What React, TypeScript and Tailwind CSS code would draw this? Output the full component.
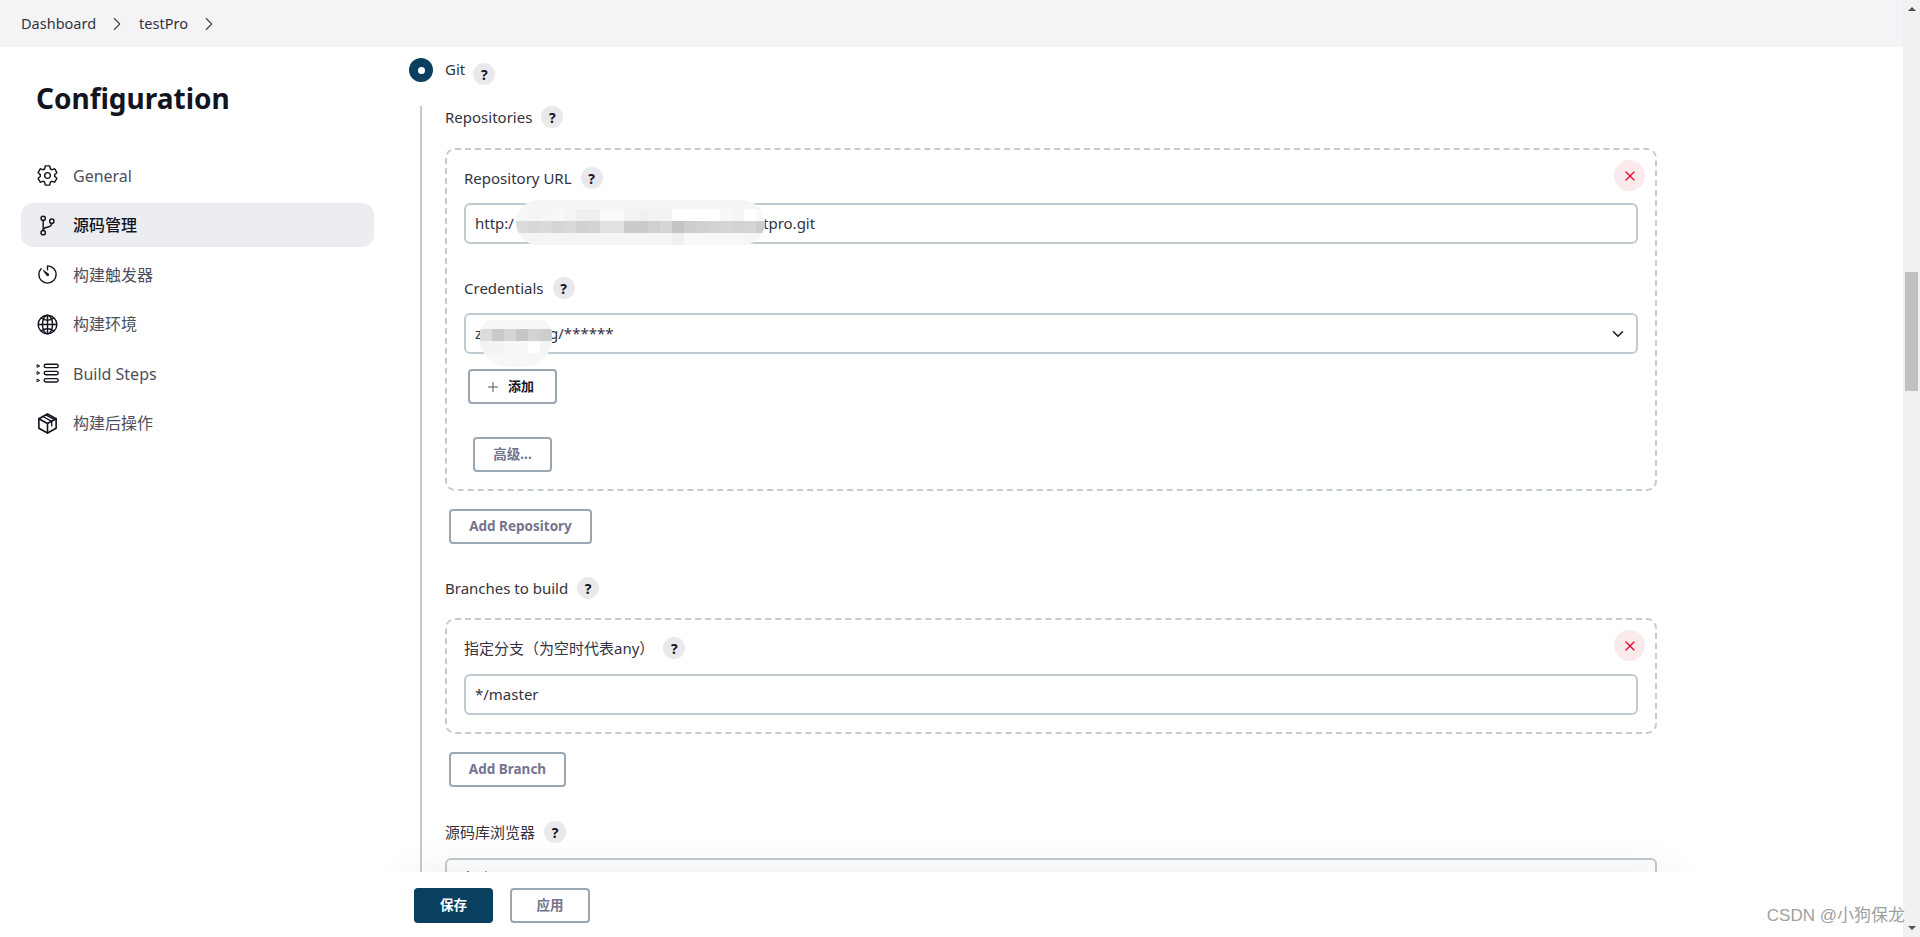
import { ChevronDown, ChevronRight, Plus, X } from "lucide-react";
import { IoGitBranchOutline, IoGlobeOutline, IoSettingsOutline, IoTimerOutline } from "react-icons/io5";

const FONT = "font-['Noto_Sans','Noto_Sans_CJK_SC',sans-serif]";

const urlMosaic = [
  ["#f6f7f8", "#f4f5f6", "#f5f6f7", "#f7f8f8", "#f3f4f5", "#efeff0", "#efeff0", "#f9f9fa", "#f9f9fa", "#f2f2f3", "#f1f1f2", "#f3f3f4", "#f3f3f4", "#ffffff", "#ffffff", "#ffffff", "#ffffff", "#f7f8f8", "#f6f6f7", "#ffffff", "#f9f9fa"],
  ["#dcdcde", "#d7d7d9", "#dadadc", "#d6d6d8", "#d9d9db", "#d1d1d3", "#d3d3d5", "#e1e1e3", "#e1e1e3", "#cbcbcd", "#cbcbcd", "#d0d0d2", "#d5d5d7", "#c4c4c6", "#cdcdcf", "#d0d0d2", "#d3d3d5", "#d6d6d8", "#d2d2d4", "#d5d5d7", "#cdcdcf"],
  ["#f4f5f7", "#f4f5f7", "#f4f5f7", "#f4f5f7", "#f4f5f7", "#f4f5f7", "#f4f5f7", "#f4f5f7", "#f4f5f7", "#f4f5f7", "#f4f5f7", "#f4f5f7", "#f4f5f7", "#eff0f2", "#f7f8f9", "#f7f8f9", "#f7f8f9", "#f7f8f9", "#f7f8f9", "#f4f5f7", "#f4f5f7"],
];

const credMosaic = [
  ["#dcdcde", "#c9c9cb", "#d5d5d7", "#c6c6c8", "#d2d2d4", "#cdcdcf"],
  ["#f2f3f5", "#f2f3f5", "#f8f8f9", "#f6f7f8", "#ffffff", "#f4f5f7"],
];

const navItems = [
  { label: "General", icon: <IoSettingsOutline size={23} /> },
  { label: "源码管理", icon: <IoGitBranchOutline size={23} />, active: true },
  { label: "构建触发器", icon: <IoTimerOutline size={23} /> },
  { label: "构建环境", icon: <IoGlobeOutline size={23} /> },
  { label: "Build Steps", icon: <StepsIcon /> },
  { label: "构建后操作", icon: <BoxIcon /> },
];

function StepsIcon() {
  return (
    <svg width="23" height="23" viewBox="0 0 23 23" fill="none" stroke="currentColor" strokeWidth="1.4">
      <rect x="8.2" y="2.2" width="14" height="3.4" rx="1.7" />
      <rect x="8.2" y="9.4" width="14" height="3.4" rx="1.7" />
      <rect x="8.2" y="16.6" width="14" height="3.4" rx="1.7" />
      <path d="M1 2.6l2.8 1.4-2.8 1.4zM1 9.6l2.8 1.4-2.8 1.4zM1 17l2.8 1.4-2.8 1.4z" strokeLinejoin="round" strokeWidth="1" />
    </svg>
  );
}

function BoxIcon() {
  return (
    <svg width="23" height="23" viewBox="0 0 24 24" fill="none" stroke="currentColor" strokeWidth="1.7" strokeLinejoin="round" strokeLinecap="round">
      <path d="M12 2l9 5v10l-9 5-9-5V7z" />
      <path d="M3 7l9 5 9-5M12 12v10" />
      <path d="M7.2 4.7l9.2 5.1v4.7M10.2 3l9 5" strokeWidth="1.4" />
    </svg>
  );
}

function Help() {
  return (
    <span className="flex h-[22px] w-[22px] shrink-0 items-center justify-center rounded-full bg-[#e9e9ec] text-[14px] font-bold text-[#14141f]">
      ?
    </span>
  );
}

function Label({ text }: { text: string }) {
  return (
    <div className="flex h-[22px] items-center gap-[9px] text-[15px] text-[#333340]">
      <span>{text}</span>
      <Help />
    </div>
  );
}

function Remove() {
  return (
    <button className="absolute right-[10px] top-[10px] flex h-[31px] w-[31px] items-center justify-center rounded-full bg-[#fbeaec] text-[#e6002b]">
      <X size={16} strokeWidth={1.8} />
    </button>
  );
}

function Field({ value }: { value: string }) {
  return (
    <div className="flex h-[41px] items-center rounded-[6px] border-2 border-[#c0cbd1] bg-white px-[9px] text-[15px] text-[#333340]">
      {value}
    </div>
  );
}

function OutlineButton({ className, children }: { className: string; children: React.ReactNode }) {
  return (
    <button
      className={`flex h-[35px] items-center justify-center rounded-[4px] border-2 border-[#9aa6b1] bg-white text-[13.5px] font-bold text-[#74748f] ${className}`}
    >
      {children}
    </button>
  );
}

export default function App() {
  return (
    <div className={`flex h-[937px] w-full overflow-hidden bg-white ${FONT}`}>
      <div className="relative min-w-0 flex-1">
        <header className="flex h-[47px] items-center bg-[#f4f4f6] pl-[21px] text-[14.5px] text-[#333340]">
          <span>Dashboard</span>
          <ChevronRight size={22} strokeWidth={1.2} className="ml-[10px] text-[#444]" />
          <span className="ml-[11px]">testPro</span>
          <ChevronRight size={22} strokeWidth={1.2} className="ml-[10px] text-[#444]" />
        </header>

        <div className="flex">
          <aside className="w-[409px] shrink-0 pl-[21px] pt-[33px]">
            <h1 className="pl-[15px] text-[28px] font-bold leading-[36px] text-[#14141f]">Configuration</h1>
            <nav className="mt-[37.5px] flex w-[353px] flex-col gap-[5.5px]">
              {navItems.map((item) => (
                <div
                  key={item.label}
                  className={`flex h-[44px] items-center gap-[14px] rounded-[12px] pl-[15px] text-[16px] ${
                    item.active ? "bg-[#ecedf1] font-medium text-[#14141f]" : "text-[#4f4f5c]"
                  }`}
                >
                  <span className="flex h-[23px] w-[23px] items-center justify-center text-[#14141f]">{item.icon}</span>
                  <span>{item.label}</span>
                </div>
              ))}
            </nav>
          </aside>

          <main className="w-[1248px] pt-[11px]">
            <div className="flex h-[24px] items-center gap-[12px] text-[15px] text-[#333340]">
              <span className="flex h-[24px] w-[24px] items-center justify-center rounded-full bg-[#0a3f60]">
                <span className="h-[7px] w-[7px] rounded-full bg-white" />
              </span>
              <span className="mt-[-2px]">Git</span>
              <span className="ml-[-4px] mt-[8px]">
                <Help />
              </span>
            </div>

            <div className="ml-[11px] mt-[24px] border-l-2 border-[#c0cbd1] pl-[23px] pb-[100px]">
              <Label text="Repositories" />

              <div className="relative mt-[20px] h-[343px] rounded-[10px] border-2 border-dashed border-[#c3ccd2] px-[17px] pt-[17px]">
                <Remove />
                <Label text="Repository URL" />
                <div className="relative mt-[14px]">
                  <Field value="http:/" />
                  <span className="absolute left-[299px] top-[9px] text-[15px] text-[#333340]">tpro.git</span>
                  <div className="absolute left-[52px] top-[-3px] h-[45px] w-[249px] overflow-hidden rounded-[24px] bg-[#f4f5f7] pt-[9px]">
                    {urlMosaic.map((row, i) => (
                      <div key={i} className="flex">
                        {row.map((color, j) => (
                          <span key={j} className="h-[12px] w-[12px] shrink-0" style={{ backgroundColor: color }} />
                        ))}
                      </div>
                    ))}
                  </div>
                </div>

                <div className="mt-[33px]">
                  <Label text="Credentials" />
                </div>
                <div className="relative mt-[14px]">
                  <div className="flex h-[41px] items-center justify-between rounded-[6px] border-2 border-[#c0cbd1] bg-white px-[9px] text-[15px] text-[#333340]">
                    <span>
                      z<span className="ml-[67px]">g/******</span>
                    </span>
                    <ChevronDown size={18} strokeWidth={2} className="text-[#14141f]" />
                  </div>
                  <div className="absolute left-[16px] top-[7px] h-[47px] w-[72px] overflow-hidden rounded-b-[28px] rounded-t-[14px] bg-[#f6f7f8] pt-[9px]">
                    {credMosaic.map((row, i) => (
                      <div key={i} className="flex">
                        {row.map((color, j) => (
                          <span key={j} className="h-[12px] w-[12px] shrink-0" style={{ backgroundColor: color }} />
                        ))}
                      </div>
                    ))}
                  </div>
                </div>
                <OutlineButton className="relative ml-[4px] mt-[15px] w-[89px] gap-[7px] pr-[6px] !text-[#14141f]">
                  <Plus size={16} strokeWidth={1.5} className="text-[#555]" />
                  <span className="text-[13px]">添加</span>
                </OutlineButton>
                <OutlineButton className="ml-[9px] mt-[33px] w-[79px]">高级...</OutlineButton>
              </div>

              <OutlineButton className="ml-[4px] mt-[18px] w-[143px]">Add Repository</OutlineButton>

              <div className="mt-[33px]">
                <Label text="Branches to build" />
              </div>

              <div className="relative mt-[19px] h-[116px] rounded-[10px] border-2 border-dashed border-[#c3ccd2] px-[17px] pt-[17px]">
                <Remove />
                <Label text="指定分支（为空时代表any）" />
                <div className="mt-[15px]">
                  <Field value="*/master" />
                </div>
              </div>

              <OutlineButton className="ml-[4px] mt-[18px] w-[117px]">Add Branch</OutlineButton>

              <div className="mt-[34px]">
                <Label text="源码库浏览器" />
              </div>
              <div className="mt-[15px]">
                <Field value="(自动)" />
              </div>
            </div>
          </main>
        </div>

        <div className="absolute bottom-0 left-[410px] h-[65px] w-[1260px] shadow-[0_0_40px_rgba(0,0,0,0.08)]" />
        <div className="absolute bottom-0 left-0 right-0 flex h-[65px] items-start gap-[17px] bg-white pl-[414px] pt-[16px]">
          <button className="flex h-[35px] w-[79px] items-center justify-center rounded-[4px] bg-[#09405f] text-[13.5px] font-bold text-white">
            保存
          </button>
          <OutlineButton className="w-[80px]">应用</OutlineButton>
        </div>

        <span className="absolute bottom-[9px] right-[-2px] font-['Liberation_Sans','Noto_Sans_CJK_SC',sans-serif] text-[17px] text-[#a0a0a0]">
          CSDN @小狗保龙
        </span>
      </div>

      <div className="flex w-[17px] shrink-0 flex-col items-center bg-[#f1f1f1] pb-[7px] pt-[7px]">
        <div className="h-0 w-0 border-x-[4px] border-b-[4px] border-x-transparent border-b-[#505050]" />
        <div className="mt-[261px] h-[119px] w-[13px] bg-[#c1c1c1]" />
        <div className="mt-auto h-0 w-0 border-x-[4px] border-t-[4px] border-x-transparent border-t-[#505050]" />
      </div>
    </div>
  );
}
